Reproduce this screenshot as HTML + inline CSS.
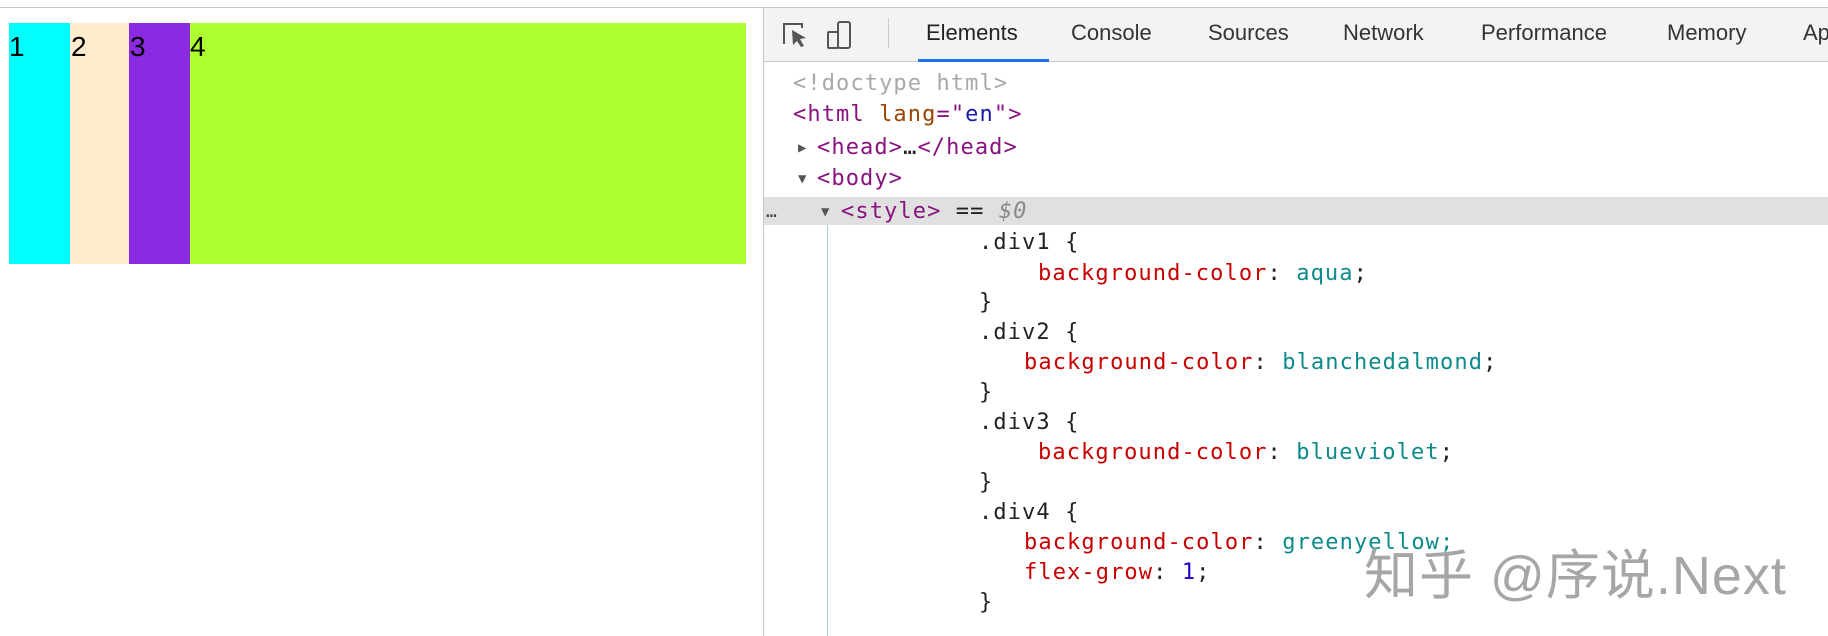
<!DOCTYPE html>
<html><head><meta charset="utf-8"><style>
body{margin:0;width:1828px;height:636px;overflow:hidden;background:#fff;position:relative;font-family:"Liberation Sans",sans-serif}
.a{position:absolute}
.m{font-family:"DejaVu Sans Mono","Liberation Mono",monospace;font-size:22px;letter-spacing:1.1px;white-space:pre;line-height:30px}
.t{color:#881280}.g{color:#a8a8a8}.n{color:#994500}.v{color:#1a1aa6}.p{color:#c80000}.c{color:#0e8a8a}.b{color:#1c00cf}.k{color:#222}
.tab{position:absolute;top:20px;font-size:22px;color:#333}
</style></head><body>
<div class="a" style="left:0;top:7px;width:1828px;height:1px;background:#c8c8c8"></div>
<div class="a" style="left:9px;top:23px;width:61px;height:241px;background:aqua"></div>
<div class="a" style="left:70px;top:23px;width:59px;height:241px;background:blanchedalmond"></div>
<div class="a" style="left:129px;top:23px;width:61px;height:241px;background:blueviolet"></div>
<div class="a" style="left:190px;top:23px;width:556px;height:241px;background:greenyellow"></div>
<div class="a" style="left:9px;top:31px;font-size:28px">1</div>
<div class="a" style="left:71px;top:31px;font-size:28px">2</div>
<div class="a" style="left:130px;top:31px;font-size:28px">3</div>
<div class="a" style="left:190px;top:31px;font-size:28px">4</div>

<div class="a" style="left:763px;top:8px;width:1px;height:628px;background:#c8c8c8"></div>
<div class="a" style="left:764px;top:8px;width:1064px;height:53px;background:#f3f3f3;border-bottom:1px solid #cacdd1"></div>
<svg class="a" style="left:780px;top:18px" width="90" height="34" viewBox="0 0 90 34">
<path d="M4 26 V6 H22 V10" fill="none" stroke="#555" stroke-width="2"/>
<path d="M12 12 L26 20 L20 21 L24 28 L21 29 L17 23 L13 27 Z" fill="#555"/>
<rect x="58" y="4" width="12" height="26" rx="2" fill="none" stroke="#555" stroke-width="2"/>
<rect x="48" y="14" width="10" height="16" rx="1" fill="#f3f3f3" stroke="#555" stroke-width="2"/>
</svg>
<div class="a" style="left:888px;top:18px;width:1px;height:30px;background:#ccc"></div>
<div class="tab" style="left:926px;color:#222">Elements</div>
<div class="a" style="left:918px;top:59px;width:131px;height:3px;background:#1a73e8"></div>
<div class="tab" style="left:1071px">Console</div>
<div class="tab" style="left:1208px">Sources</div>
<div class="tab" style="left:1343px">Network</div>
<div class="tab" style="left:1481px">Performance</div>
<div class="tab" style="left:1667px">Memory</div>
<div class="tab" style="left:1803px">Ap</div>

<div class="a" style="left:764px;top:197px;width:1064px;height:28px;background:#e0e0e0"></div>
<div class="a" style="left:827px;top:225px;width:1px;height:411px;background:#a8c8e8"></div>

<div class="a m" style="left:793px;top:69px"><span class="g">&lt;!doctype html&gt;</span></div>
<div class="a m" style="left:793px;top:100px"><span class="t">&lt;html </span><span class="n">lang</span><span class="t">="</span><span class="v">en</span><span class="t">"&gt;</span></div>
<div class="a m" style="left:798px;top:133px;font-size:14px;color:#555">▶</div>
<div class="a m" style="left:817px;top:133px"><span class="t">&lt;head&gt;</span><span class="k">…</span><span class="t">&lt;/head&gt;</span></div>
<div class="a m" style="left:798px;top:164px;font-size:14px;color:#555">▼</div>
<div class="a m" style="left:817px;top:164px"><span class="t">&lt;body&gt;</span></div>
<div class="a m" style="left:766px;top:197px;color:#444;font-size:18px">…</div>
<div class="a m" style="left:821px;top:197px;font-size:14px;color:#555">▼</div>
<div class="a m" style="left:841px;top:197px"><span class="t">&lt;style&gt;</span><span class="k"> == </span><span style="color:#888;font-style:italic">$0</span></div>
<div class="a m k" style="left:979px;top:228px">.div1 {</div>
<div class="a m" style="left:1038px;top:259px"><span class="p">background-color</span><span class="k">: </span><span class="c">aqua</span><span class="k">;</span></div>
<div class="a m k" style="left:979px;top:288px">}</div>
<div class="a m k" style="left:979px;top:318px">.div2 {</div>
<div class="a m" style="left:1024px;top:348px"><span class="p">background-color</span><span class="k">: </span><span class="c">blanchedalmond</span><span class="k">;</span></div>
<div class="a m k" style="left:979px;top:378px">}</div>
<div class="a m k" style="left:979px;top:408px">.div3 {</div>
<div class="a m" style="left:1038px;top:438px"><span class="p">background-color</span><span class="k">: </span><span class="c">blueviolet</span><span class="k">;</span></div>
<div class="a m k" style="left:979px;top:468px">}</div>
<div class="a m k" style="left:979px;top:498px">.div4 {</div>
<div class="a m" style="left:1024px;top:528px"><span class="p">background-color</span><span class="k">: </span><span class="c">greenyellow;</span></div>
<div class="a m" style="left:1024px;top:558px"><span class="p">flex-grow</span><span class="k">: </span><span class="b">1</span><span class="k">;</span></div>
<div class="a m k" style="left:979px;top:588px">}</div>

<div class="a" style="left:1364px;top:531px;font-size:54px;letter-spacing:1px;color:rgba(150,150,150,0.85);font-family:'Liberation Sans','Noto Sans CJK SC',sans-serif;white-space:nowrap;text-shadow:0 0 2px #fff,1px 1px 0 #fff">知乎 @序说.Next</div>
</body></html>
